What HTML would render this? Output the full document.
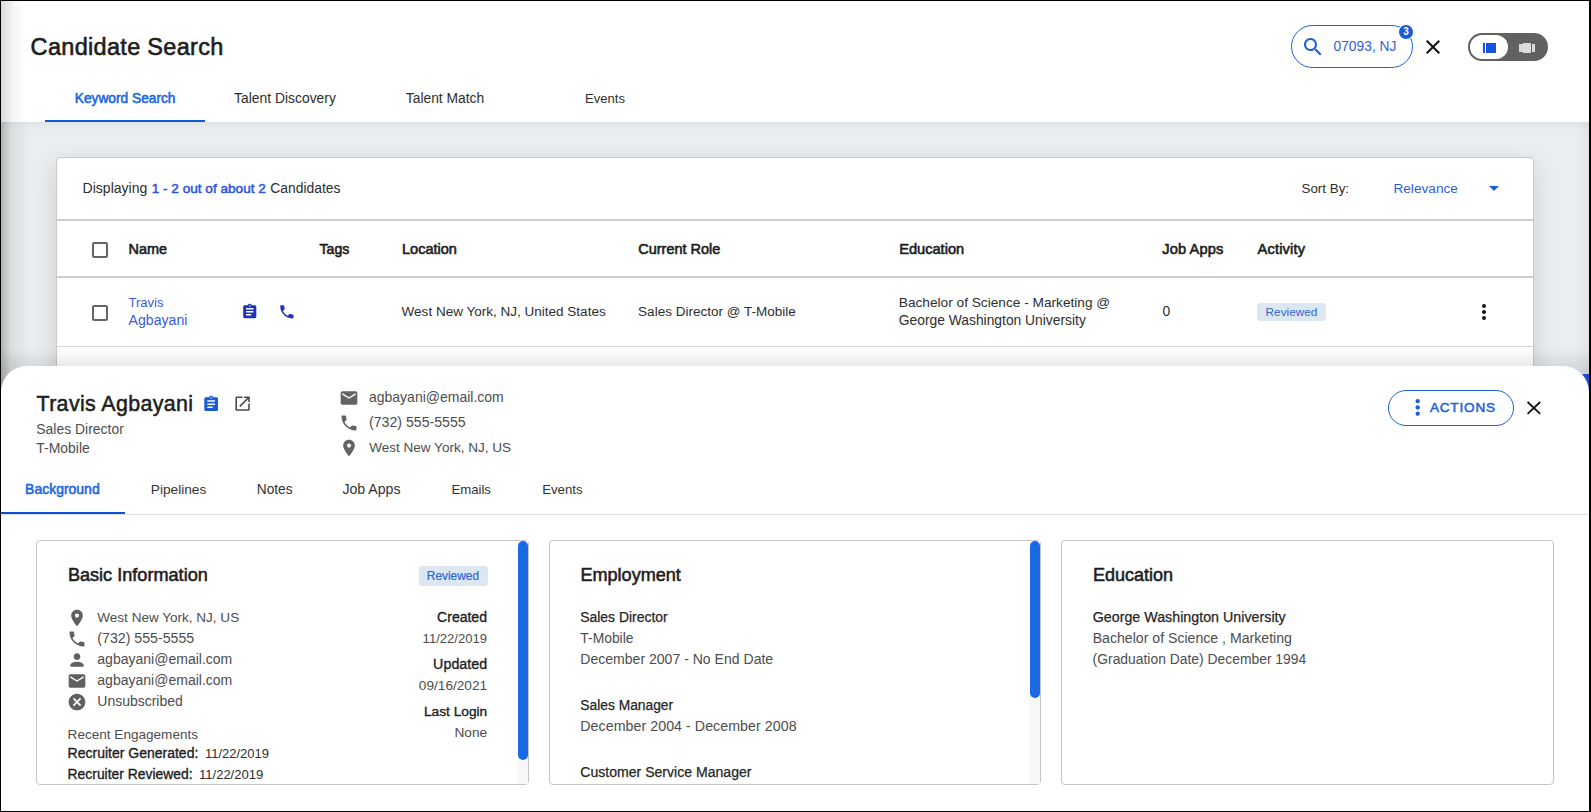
<!DOCTYPE html>
<html>
<head>
<meta charset="utf-8">
<title>Candidate Search</title>
<style>
*{box-sizing:border-box;margin:0;padding:0}
html,body{width:1591px;height:812px;overflow:hidden;background:#ebeef0;font-family:"Liberation Sans",sans-serif;color:#333}
#root{position:absolute;left:0;top:0;width:1591px;height:812px;overflow:hidden;background:#ebeef0}
.t{position:absolute;white-space:nowrap;line-height:0}
.t i{display:inline-block;width:0;height:40px}
.abs{position:absolute}
svg{position:absolute;display:block}
#hdr{position:absolute;left:0;top:0;width:1591px;height:122px;background:#fff;box-shadow:0 0 10px rgba(0,0,0,.09)}
#hul{position:absolute;left:45px;top:120px;width:160px;height:2px;background:#0a5ae0}
#pill{position:absolute;left:1291px;top:25px;width:122px;height:43px;border:1px solid #1d5fd6;border-radius:22px;background:#fff}
#badge{position:absolute;left:1398px;top:24px;width:16px;height:16px;border-radius:8px;background:#1a5cd8;border:1px solid #fff;color:#fff;font-size:10px;font-weight:700;text-align:center;line-height:14px}
#tog{position:absolute;left:1468px;top:33px;width:80px;height:28px;border-radius:14px;background:#616161}
#knob{position:absolute;left:1470px;top:35px;width:38px;height:24px;border-radius:12px;background:#fff}
#card{position:absolute;left:56px;top:157px;width:1478px;height:300px;background:#fff;border:1px solid #c9c9c9;border-radius:4px;box-shadow:0 8px 24px rgba(0,0,0,.14)}
.hr{position:absolute;left:57px;width:1476px;background:#cdcdcd}
.cb{position:absolute;width:16px;height:16px;border:2px solid #646464;border-radius:2px;background:#fff}
.chip{position:absolute;background:#dce7f2;border-radius:3px}
#panel{position:absolute;left:1px;top:366px;width:1588px;height:446px;background:#fff;border-radius:26px 26px 0 0}
.pc{position:absolute;top:540px;height:245px;background:#fff;border:1px solid #c6c6c6;border-radius:4px}
.sbar{position:absolute;width:9.6px;border-radius:5px;background:#1a6ae8}
.strack{position:absolute;width:10px;background:#f7f7f7}
#frame{position:absolute;left:0;top:0;width:1591px;height:812px;border-style:solid;border-color:#000;border-width:1px 2px 1px 1px;pointer-events:none}
</style>
</head>
<body>
<div id="root">
<div class="abs" style="left:0;top:122px;width:30px;height:300px;background:linear-gradient(90deg,rgba(0,0,0,.26),rgba(0,0,0,.07) 35%,rgba(0,0,0,0))"></div>
<div class="abs" style="left:1575px;top:122px;width:16px;height:300px;background:linear-gradient(270deg,rgba(0,0,0,.05),rgba(0,0,0,0))"></div>
<div id="hdr"></div>
<div class="abs" style="left:0;top:0;width:26px;height:122px;background:linear-gradient(90deg,rgba(0,0,0,.16),rgba(0,0,0,.04) 50%,rgba(0,0,0,0))"></div>
<div id="hul"></div>
<div id="pill"></div>
<svg style="left:1300.8px;top:35px" width="24" height="24" viewBox="0 0 24 24"><path fill="#1d5fd6" d="M15.5 14h-.79l-.28-.27C15.41 12.59 16 11.11 16 9.5 16 5.91 13.09 3 9.5 3S3 5.91 3 9.5 5.91 16 9.5 16c1.61 0 3.09-.59 4.23-1.57l.27.28v.79l5 4.99L20.49 19l-4.99-5zm-6 0C7.01 14 5 11.99 5 9.5S7.01 5 9.5 5 14 7.01 14 9.5 11.99 14 9.5 14z"/></svg>
<div id="badge">3</div>
<svg style="left:1420.7px;top:35px" width="24" height="24" viewBox="0 0 24 24"><path fill="#111" d="M19 6.41L17.59 5 12 10.59 6.41 5 5 6.41 10.59 12 5 17.59 6.41 19 12 13.41 17.59 19 19 17.59 13.41 12z"/></svg>
<div id="tog"></div>
<div id="knob"></div>
<div class="abs" style="left:1482.6px;top:43px;width:2.3px;height:9.7px;background:#1a52e0"></div>
<div class="abs" style="left:1486px;top:43px;width:10px;height:9.7px;background:#1a52e0"></div>
<div class="abs" style="left:1519px;top:44px;width:3.6px;height:8px;background:#d9d9d9"></div>
<div class="abs" style="left:1523px;top:43px;width:8px;height:10px;background:#dcdcdc"></div>
<div class="abs" style="left:1531.6px;top:44px;width:3.4px;height:8px;background:#d9d9d9"></div>
<div id="card"></div>
<svg style="left:1482px;top:175.7px" width="24" height="24" viewBox="0 0 24 24"><path fill="#1d5fd6" d="M7 10l5 5 5-5z"/></svg>
<div class="hr" style="top:219px;height:2px"></div>
<div class="hr" style="top:276px;height:2px"></div>
<div class="hr" style="top:346px;height:1px;background:#d4d4d4"></div>
<div class="cb" style="left:92px;top:242px"></div>
<div class="cb" style="left:92px;top:305px"></div>
<svg style="left:241.2px;top:303.1px" width="17.5" height="17.5" viewBox="0 0 24 24"><path fill="#1f33b8" d="M19 3h-4.18C14.4 1.84 13.3 1 12 1c-1.3 0-2.4.84-2.82 2H5c-1.1 0-2 .9-2 2v14c0 1.1.9 2 2 2h14c1.1 0 2-.9 2-2V5c0-1.1-.9-2-2-2zm-7 0c.55 0 1 .45 1 1s-.45 1-1 1-1-.45-1-1 .45-1 1-1zm2 14H7v-2h7v2zm3-4H7v-2h10v2zm0-4H7V7h10v2z"/></svg>
<svg style="left:278.2px;top:302.9px" width="17.7" height="17.7" viewBox="0 0 24 24"><path fill="#1f33b8" d="M6.62 10.79c1.44 2.83 3.76 5.14 6.59 6.59l2.2-2.2c.27-.27.67-.36 1.02-.24 1.12.37 2.33.57 3.57.57.55 0 1 .45 1 1V20c0 .55-.45 1-1 1-9.39 0-17-7.61-17-17 0-.55.45-1 1-1h3.5c.55 0 1 .45 1 1 0 1.25.2 2.45.57 3.57.11.35.03.74-.25 1.02l-2.2 2.2z"/></svg>
<div class="chip" style="left:1257px;top:303px;width:69px;height:17.5px"></div>
<svg style="left:1471.5px;top:300px" width="24" height="24" viewBox="0 0 24 24"><path fill="#111" d="M12 8c1.1 0 2-.9 2-2s-.9-2-2-2-2 .9-2 2 .9 2 2 2zm0 2c-1.1 0-2 .9-2 2s.9 2 2 2 2-.9 2-2-.9-2-2-2zm0 6c-1.1 0-2 .9-2 2s.9 2 2 2 2-.9 2-2-.9-2-2-2z"/></svg>
<div class="abs" style="left:1px;top:347px;width:1588px;height:50px;background:linear-gradient(180deg,rgba(0,0,0,0) 0,rgba(0,0,0,.082) 19px,rgba(0,0,0,.14) 50px)"></div>
<div class="abs" style="left:1574px;top:374px;width:16px;height:30px;background:#1d50c8"></div>
<div id="panel"></div>
<svg style="left:201.6px;top:395.2px" width="18.3" height="18.3" viewBox="0 0 24 24"><path fill="#1a5cd8" d="M19 3h-4.18C14.4 1.84 13.3 1 12 1c-1.3 0-2.4.84-2.82 2H5c-1.1 0-2 .9-2 2v14c0 1.1.9 2 2 2h14c1.1 0 2-.9 2-2V5c0-1.1-.9-2-2-2zm-7 0c.55 0 1 .45 1 1s-.45 1-1 1-1-.45-1-1 .45-1 1-1zm2 14H7v-2h7v2zm3-4H7v-2h10v2zm0-4H7V7h10v2z"/></svg>
<svg style="left:233.3px;top:394.4px" width="19.2" height="19.2" viewBox="0 0 24 24"><path fill="#4a4a4a" d="M19 19H5V5h7V3H5c-1.11 0-2 .9-2 2v14c0 1.1.89 2 2 2h14c1.1 0 2-.9 2-2v-7h-2v7zM14 3v2h3.59l-9.83 9.83 1.41 1.41L19 6.41V10h2V3h-7z"/></svg>
<svg style="left:338.8px;top:387.8px" width="20" height="20" viewBox="0 0 24 24"><path fill="#636363" d="M20 4H4c-1.1 0-1.99.9-1.99 2L2 18c0 1.1.9 2 2 2h16c1.1 0 2-.9 2-2V6c0-1.1-.9-2-2-2zm0 4l-8 5-8-5V6l8 5 8-5v2z"/></svg>
<svg style="left:338.6px;top:412.7px" width="20" height="20" viewBox="0 0 24 24"><path fill="#636363" d="M6.62 10.79c1.44 2.83 3.76 5.14 6.59 6.59l2.2-2.2c.27-.27.67-.36 1.02-.24 1.12.37 2.33.57 3.57.57.55 0 1 .45 1 1V20c0 .55-.45 1-1 1-9.39 0-17-7.61-17-17 0-.55.45-1 1-1h3.5c.55 0 1 .45 1 1 0 1.25.2 2.45.57 3.57.11.35.03.74-.25 1.02l-2.2 2.2z"/></svg>
<svg style="left:339px;top:438.4px" width="20" height="20" viewBox="0 0 24 24"><path fill="#636363" d="M12 2C8.13 2 5 5.13 5 9c0 5.25 7 13 7 13s7-7.75 7-13c0-3.87-3.13-7-7-7zm0 9.5c-1.38 0-2.5-1.12-2.5-2.5s1.12-2.5 2.5-2.5 2.5 1.12 2.5 2.5-1.12 2.5-2.5 2.5z"/></svg>
<div class="abs" style="left:1388px;top:390px;width:126px;height:36px;border:1px solid #1d5fd6;border-radius:18px"></div>
<svg style="left:1410px;top:395px" width="16" height="26" viewBox="0 0 16 26"><circle cx="7.7" cy="6.2" r="2.15" fill="#1d5fd6"/><circle cx="7.7" cy="12.5" r="2.15" fill="#1d5fd6"/><circle cx="7.7" cy="18.75" r="2.15" fill="#1d5fd6"/></svg>
<svg style="left:1524px;top:398px" width="20" height="20" viewBox="0 0 20 20"><path d="M3.6 4 L16.2 15.9 M16.2 4 L3.6 15.9" stroke="#111" stroke-width="1.8" fill="none"/></svg>
<div class="abs" style="left:1px;top:514px;width:1588px;height:1px;background:#dcdcdc"></div>
<div class="abs" style="left:1px;top:512px;width:124px;height:2px;background:#0a52d4"></div>
<div class="pc" style="left:36px;width:493px"></div>
<div class="pc" style="left:549px;width:492px"></div>
<div class="pc" style="left:1061px;width:493px"></div>
<div class="strack" style="left:518px;top:541px;height:243px"></div><div class="sbar" style="left:518.2px;top:541px;height:218.5px"></div>
<div class="strack" style="left:1030px;top:541px;height:243px"></div><div class="sbar" style="left:1030.2px;top:541px;height:157px"></div>
<div class="chip" style="left:419px;top:566px;width:69px;height:19.5px"></div>
<svg style="left:67px;top:607.8px" width="20" height="20" viewBox="0 0 24 24"><path fill="#606060" d="M12 2C8.13 2 5 5.13 5 9c0 5.25 7 13 7 13s7-7.75 7-13c0-3.87-3.13-7-7-7zm0 9.5c-1.38 0-2.5-1.12-2.5-2.5s1.12-2.5 2.5-2.5 2.5 1.12 2.5 2.5-1.12 2.5-2.5 2.5z"/></svg>
<svg style="left:67px;top:628.85px" width="20" height="20" viewBox="0 0 24 24"><path fill="#606060" d="M6.62 10.79c1.44 2.83 3.76 5.14 6.59 6.59l2.2-2.2c.27-.27.67-.36 1.02-.24 1.12.37 2.33.57 3.57.57.55 0 1 .45 1 1V20c0 .55-.45 1-1 1-9.39 0-17-7.61-17-17 0-.55.45-1 1-1h3.5c.55 0 1 .45 1 1 0 1.25.2 2.45.57 3.57.11.35.03.74-.25 1.02l-2.2 2.2z"/></svg>
<svg style="left:67px;top:649.9px" width="20" height="20" viewBox="0 0 24 24"><path fill="#606060" d="M12 12c2.21 0 4-1.79 4-4s-1.79-4-4-4-4 1.79-4 4 1.79 4 4 4zm0 2c-2.67 0-8 1.34-8 4v2h16v-2c0-2.66-5.33-4-8-4z"/></svg>
<svg style="left:67px;top:670.95px" width="20" height="20" viewBox="0 0 24 24"><path fill="#606060" d="M20 4H4c-1.1 0-1.99.9-1.99 2L2 18c0 1.1.9 2 2 2h16c1.1 0 2-.9 2-2V6c0-1.1-.9-2-2-2zm0 4l-8 5-8-5V6l8 5 8-5v2z"/></svg>
<svg style="left:67px;top:692.0px" width="20" height="20" viewBox="0 0 24 24"><path fill="#606060" d="M12 2C6.47 2 2 6.47 2 12s4.47 10 10 10 10-4.47 10-10S17.53 2 12 2zm5 13.59L15.59 17 12 13.41 8.41 17 7 15.59 10.59 12 7 8.41 8.41 7 12 10.59 15.59 7 17 8.41 13.41 12 17 15.59z"/></svg>
<div class="t" style="left:30.6px;top:15px;font-size:23.5px;color:#1d1d1d;letter-spacing:0.311px;-webkit-text-stroke:0.6px #1d1d1d"><i></i>Candidate Search</div>
<div class="t" style="left:74.8px;top:63px;font-size:13.72px;color:#1a66e0;-webkit-text-stroke:0.55px #1a66e0"><i></i>Keyword Search</div>
<div class="t" style="left:234.1px;top:63px;font-size:13.88px;color:#2e2e2e"><i></i>Talent Discovery</div>
<div class="t" style="left:405.8px;top:63px;font-size:13.83px;color:#2e2e2e"><i></i>Talent Match</div>
<div class="t" style="left:585.1px;top:63px;font-size:13.06px;color:#2e2e2e"><i></i>Events</div>
<div class="t" style="left:1333.5px;top:11px;font-size:13.82px;color:#3561cf"><i></i>07093, NJ</div>
<div class="t" style="left:82.6px;top:153px;font-size:14.02px;color:#2e2e2e"><i></i>Displaying</div>
<div class="t" style="left:151.7px;top:153px;font-size:13.6px;color:#2a55e0;-webkit-text-stroke:0.5px #2a55e0"><i></i>1 - 2 out of about 2</div>
<div class="t" style="left:270.3px;top:153px;font-size:13.89px;color:#2e2e2e"><i></i>Candidates</div>
<div class="t" style="left:1301.5px;top:153px;font-size:13.38px;color:#2e2e2e"><i></i>Sort By:</div>
<div class="t" style="left:1393.4px;top:153px;font-size:13.67px;color:#2f5fd8"><i></i>Relevance</div>
<div class="t" style="left:128.5px;top:214px;font-size:14.43px;color:#1d1d1d;-webkit-text-stroke:0.6px #1d1d1d"><i></i>Name</div>
<div class="t" style="left:319.5px;top:214px;font-size:14.11px;color:#1d1d1d;-webkit-text-stroke:0.6px #1d1d1d"><i></i>Tags</div>
<div class="t" style="left:402.0px;top:214px;font-size:14.52px;color:#1d1d1d;-webkit-text-stroke:0.6px #1d1d1d"><i></i>Location</div>
<div class="t" style="left:638.3px;top:214px;font-size:14.48px;color:#1d1d1d;-webkit-text-stroke:0.6px #1d1d1d"><i></i>Current Role</div>
<div class="t" style="left:899.2px;top:214px;font-size:14.61px;color:#1d1d1d;-webkit-text-stroke:0.6px #1d1d1d"><i></i>Education</div>
<div class="t" style="left:1162.3px;top:214px;font-size:14.63px;color:#1d1d1d;letter-spacing:0.114px;-webkit-text-stroke:0.6px #1d1d1d"><i></i>Job Apps</div>
<div class="t" style="left:1257.6px;top:214px;font-size:14.63px;color:#1d1d1d;letter-spacing:0.152px;-webkit-text-stroke:0.6px #1d1d1d"><i></i>Activity</div>
<div class="t" style="left:128.5px;top:267px;font-size:13.03px;color:#3a5bd6"><i></i>Travis</div>
<div class="t" style="left:128.5px;top:285px;font-size:14.11px;color:#3a5bd6;letter-spacing:0.023px"><i></i>Agbayani</div>
<div class="t" style="left:401.6px;top:276px;font-size:13.52px;color:#2e2e2e"><i></i>West New York, NJ, United States</div>
<div class="t" style="left:638.1px;top:276px;font-size:13.53px;color:#2e2e2e"><i></i>Sales Director @ T-Mobile</div>
<div class="t" style="left:898.8px;top:267px;font-size:13.68px;color:#2e2e2e"><i></i>Bachelor of Science - Marketing @</div>
<div class="t" style="left:898.8px;top:285px;font-size:13.83px;color:#2e2e2e"><i></i>George Washington University</div>
<div class="t" style="left:1162.4px;top:276px;font-size:13.83px;color:#2e2e2e"><i></i>0</div>
<div class="t" style="left:1265.6px;top:276px;font-size:11.78px;color:#3466d4"><i></i>Reviewed</div>
<div class="t" style="left:36.5px;top:371px;font-size:21.4px;color:#1d1d1d;letter-spacing:0.364px;-webkit-text-stroke:0.5px #1d1d1d"><i></i>Travis Agbayani</div>
<div class="t" style="left:36.3px;top:394px;font-size:13.94px;color:#4d4d4d"><i></i>Sales Director</div>
<div class="t" style="left:36.3px;top:413px;font-size:13.96px;color:#4d4d4d"><i></i>T-Mobile</div>
<div class="t" style="left:369px;top:362px;font-size:13.99px;color:#4d4d4d"><i></i>agbayani@email.com</div>
<div class="t" style="left:369px;top:387px;font-size:14.15px;color:#4d4d4d"><i></i>(732) 555-5555</div>
<div class="t" style="left:369.2px;top:412px;font-size:13.54px;color:#4d4d4d"><i></i>West New York, NJ, US</div>
<div class="t" style="left:1429.9px;top:372px;font-size:13.58px;color:#1d5fd6;letter-spacing:0.804px;-webkit-text-stroke:0.5px #1d5fd6"><i></i>ACTIONS</div>
<div class="t" style="left:25.1px;top:454px;font-size:13.98px;color:#1a66e0;-webkit-text-stroke:0.55px #1a66e0"><i></i>Background</div>
<div class="t" style="left:150.8px;top:454px;font-size:13.68px;color:#333"><i></i>Pipelines</div>
<div class="t" style="left:256.8px;top:454px;font-size:13.71px;color:#333"><i></i>Notes</div>
<div class="t" style="left:342.4px;top:454px;font-size:14.13px;color:#333"><i></i>Job Apps</div>
<div class="t" style="left:451.4px;top:454px;font-size:13.2px;color:#333"><i></i>Emails</div>
<div class="t" style="left:542.2px;top:454px;font-size:13.22px;color:#333"><i></i>Events</div>
<div class="t" style="left:67.9px;top:541px;font-size:18.11px;color:#1d1d1d;-webkit-text-stroke:0.55px #1d1d1d"><i></i>Basic Information</div>
<div class="t" style="left:426.8px;top:540px;font-size:11.91px;color:#2c66d8;-webkit-text-stroke:0.2px #2c66d8"><i></i>Reviewed</div>
<div class="t" style="left:97.3px;top:582px;font-size:13.54px;color:#4d4d4d"><i></i>West New York, NJ, US</div>
<div class="t" style="left:97.3px;top:603px;font-size:14.18px;color:#4d4d4d"><i></i>(732) 555-5555</div>
<div class="t" style="left:97.3px;top:624px;font-size:14.02px;color:#4d4d4d"><i></i>agbayani@email.com</div>
<div class="t" style="left:97.3px;top:645px;font-size:14.02px;color:#4d4d4d"><i></i>agbayani@email.com</div>
<div class="t" style="left:97.3px;top:666px;font-size:13.99px;color:#4d4d4d"><i></i>Unsubscribed</div>
<div class="t" style="left:67.6px;top:699px;font-size:13.57px;color:#4d4d4d"><i></i>Recent Engagements</div>
<div class="t" style="left:67.6px;top:718px;font-size:14.0px;color:#1d1d1d;-webkit-text-stroke:0.35px #1d1d1d"><i></i>Recruiter Generated:</div>
<div class="t" style="left:204.9px;top:718px;font-size:13.06px;color:#2e2e2e;letter-spacing:-0.019px"><i></i>11/22/2019</div>
<div class="t" style="left:67.6px;top:739px;font-size:13.89px;color:#1d1d1d;-webkit-text-stroke:0.35px #1d1d1d"><i></i>Recruiter Reviewed:</div>
<div class="t" style="left:199.1px;top:739px;font-size:13.06px;color:#2e2e2e;letter-spacing:-0.03px"><i></i>11/22/2019</div>
<div class="t" style="left:437.1px;top:582px;font-size:14.03px;color:#1d1d1d;-webkit-text-stroke:0.35px #1d1d1d"><i></i>Created</div>
<div class="t" style="left:422.6px;top:603px;font-size:13.07px;color:#4d4d4d"><i></i>11/22/2019</div>
<div class="t" style="left:433.1px;top:629px;font-size:14.21px;color:#1d1d1d;letter-spacing:0.065px;-webkit-text-stroke:0.35px #1d1d1d"><i></i>Updated</div>
<div class="t" style="left:418.8px;top:650px;font-size:13.67px;color:#4d4d4d"><i></i>09/16/2021</div>
<div class="t" style="left:424.0px;top:676px;font-size:13.7px;color:#1d1d1d;-webkit-text-stroke:0.35px #1d1d1d"><i></i>Last Login</div>
<div class="t" style="left:454.5px;top:697px;font-size:13.68px;color:#4d4d4d"><i></i>None</div>
<div class="t" style="left:580.4px;top:541px;font-size:18.09px;color:#1d1d1d;-webkit-text-stroke:0.55px #1d1d1d"><i></i>Employment</div>
<div class="t" style="left:580.2px;top:582px;font-size:13.94px;color:#262626;-webkit-text-stroke:0.25px #262626"><i></i>Sales Director</div>
<div class="t" style="left:580.3px;top:603px;font-size:13.88px;color:#4d4d4d"><i></i>T-Mobile</div>
<div class="t" style="left:580.3px;top:624px;font-size:14.06px;color:#4d4d4d"><i></i>December 2007 - No End Date</div>
<div class="t" style="left:580.3px;top:670px;font-size:13.8px;color:#262626;-webkit-text-stroke:0.25px #262626"><i></i>Sales Manager</div>
<div class="t" style="left:580.3px;top:691px;font-size:14.21px;color:#4d4d4d;letter-spacing:0.055px"><i></i>December 2004 - December 2008</div>
<div class="t" style="left:580.3px;top:737px;font-size:14.07px;color:#262626;-webkit-text-stroke:0.25px #262626"><i></i>Customer Service Manager</div>
<div class="t" style="left:1092.9px;top:541px;font-size:18.01px;color:#1d1d1d;-webkit-text-stroke:0.55px #1d1d1d"><i></i>Education</div>
<div class="t" style="left:1092.7px;top:582px;font-size:14.21px;color:#262626;letter-spacing:0.033px;-webkit-text-stroke:0.25px #262626"><i></i>George Washington University</div>
<div class="t" style="left:1092.7px;top:603px;font-size:14.12px;color:#4d4d4d"><i></i>Bachelor of Science , Marketing</div>
<div class="t" style="left:1092.6px;top:624px;font-size:13.88px;color:#4d4d4d"><i></i>(Graduation Date) December 1994</div>
<div class="abs" style="left:1588.5px;top:191px;width:1px;height:26px;background:#1c3f7a"></div>
<div id="frame"></div>
</div>
</body>
</html>
